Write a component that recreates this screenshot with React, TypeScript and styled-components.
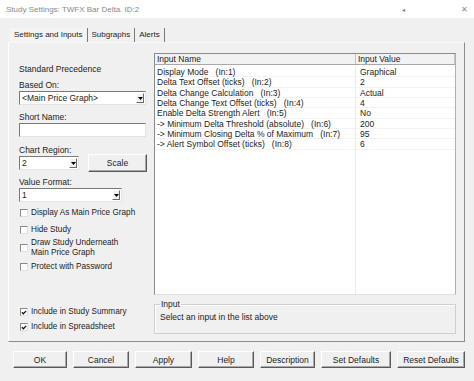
import React from 'react';
import styled, { createGlobalStyle } from 'styled-components';

const GlobalStyle = createGlobalStyle`
  body {
    margin: 0;
    font-family: 'Liberation Sans', Arial, sans-serif;
    font-size: 8.5px;
    color: #1c1c1c;
  }
`;

interface IInput {
  name: string;
  idx: number;
  value: string;
}

const inputs: IInput[] = [
  { name: 'Display Mode', idx: 1, value: 'Graphical' },
  { name: 'Delta Text Offset (ticks)', idx: 2, value: '2' },
  { name: 'Delta Change Calculation', idx: 3, value: 'Actual' },
  { name: 'Delta Change Text Offset (ticks)', idx: 4, value: '4' },
  { name: 'Enable Delta Strength Alert', idx: 5, value: 'No' },
  { name: '-> Minimum Delta Threshold (absolute)', idx: 6, value: '200' },
  { name: '-> Minimum Closing Delta % of Maximum', idx: 7, value: '95' },
  { name: '-> Alert Symbol Offset (ticks)', idx: 8, value: '6' },
];

const footerButtons = [
  { label: 'OK', width: 54 },
  { label: 'Cancel', width: 56 },
  { label: 'Apply', width: 57 },
  { label: 'Help', width: 56 },
  { label: 'Description', width: 55 },
  { label: 'Set Defaults', width: 70 },
  { label: 'Reset Defaults', width: 68 },
];

function Combo(props: { text: string; width: number }) {
  return (
    <ComboBox $width={props.width}>
      <ComboText>{props.text}</ComboText>
      <ComboArrow>
        <svg width="5" height="3" viewBox="0 0 5 3">
          <path d="M0 0 H5 L2.5 3 Z" fill="#000" />
        </svg>
      </ComboArrow>
    </ComboBox>
  );
}

function Check(props: { checked?: boolean; children: React.ReactNode; $top: number }) {
  return (
    <CheckRow $top={props.$top}>
      <CheckBox>
        {props.checked ? (
          <svg width="7" height="7" viewBox="0 0 7 7">
            <path d="M1 3.2 L2.8 5 L6 1.6" stroke="#111" strokeWidth="1.4" fill="none" />
          </svg>
        ) : null}
      </CheckBox>
      <CheckLabel>{props.children}</CheckLabel>
    </CheckRow>
  );
}

export default function App() {
  return (
    <Window>
      <GlobalStyle />
      <TitleBar>
        <TitleText>Study Settings: TWFX Bar Delta. ID:2</TitleText>
        <TitleIcons>
          <SmallGlyph>◂</SmallGlyph>
          <CloseGlyph>✕</CloseGlyph>
        </TitleIcons>
      </TitleBar>

      <TabStrip>
        <Tab $active>Settings and Inputs</Tab>
        <Tab>Subgraphs</Tab>
        <Tab>Alerts</Tab>
      </TabStrip>

      <TabPanel>
        <LeftColumn>
          <Label $top={21}>Standard Precedence</Label>
          <Label $top={5}>Based On:</Label>
          <Combo text="<Main Price Graph>" width={127} />
          <Label $top={7}>Short Name:</Label>
          <TextInput />
          <Label $top={8}>Chart Region:</Label>
          <InlineRow>
            <Combo text="2" width={60} />
            <PushButton $width={59} $height={18}>Scale</PushButton>
          </InlineRow>
          <Label $top={5}>Value Format:</Label>
          <Combo text="1" width={103} />
          <Check $top={6}>Display As Main Price Graph</Check>
          <Check $top={7}>Hide Study</Check>
          <Check $top={3}>
            Draw Study Underneath
            <br />
            Main Price Graph
          </Check>
          <Check $top={4}>Protect with Password</Check>
          <Check $top={35} checked>
            Include in Study Summary
          </Check>
          <Check $top={5} checked>
            Include in Spreadsheet
          </Check>
        </LeftColumn>

        <RightColumn>
          <ListView>
            <HeaderRow>
              <HeaderCell $first>Input Name</HeaderCell>
              <HeaderCell>Input Value</HeaderCell>
            </HeaderRow>
            <Spacer $h={2} />
            {inputs.map((input: IInput) => (
              <Row key={input.idx}>
                <Cell $first>
                  {input.name}&nbsp;&nbsp;&nbsp;(In:{input.idx})
                </Cell>
                <Cell>{input.value}</Cell>
              </Row>
            ))}
            <FillerRow>
              <Cell $first />
              <Cell />
            </FillerRow>
          </ListView>

          <GroupBox>
            <Legend>Input</Legend>
            <GroupText>Select an input in the list above</GroupText>
          </GroupBox>
        </RightColumn>
      </TabPanel>

      <ButtonBar>
        {footerButtons.map((b) => (
          <PushButton key={b.label} $width={b.width} $height={17}>
            {b.label}
          </PushButton>
        ))}
      </ButtonBar>
    </Window>
  );
}

const Window = styled.div`
  width: 474px;
  height: 381px;
  background: #f0f0f0;
  overflow: hidden;
  display: flex;
  flex-direction: column;
`;

const TitleBar = styled.div`
  height: 18px;
  background: #ffffff;
  display: flex;
  align-items: center;
  justify-content: space-between;
  padding: 0 6px;
`;

const TitleText = styled.span`
  color: #8a8a8a;
  font-size: 8px;
`;

const TitleIcons = styled.div`
  display: flex;
  align-items: center;
  gap: 56px;
`;

const SmallGlyph = styled.span`
  color: #777;
  font-size: 6px;
`;

const CloseGlyph = styled.span`
  color: #8a8a8a;
  font-size: 8px;
`;

const TabStrip = styled.div`
  display: flex;
  align-items: center;
  margin-top: 10px;
  height: 14px;
  padding-left: 10px;
`;

const Tab = styled.div<{ $active?: boolean }>`
  padding: 0 4px;
  height: 14px;
  line-height: 14px;
  border-right: 1px solid #7a7a7a;
  font-size: 8px;
  background: ${(p) => (p.$active ? '#f4f4f4' : 'transparent')};
`;

const TabPanel = styled.div`
  margin: 0 9px 0 8px;
  height: 300px;
  border-top: 1px solid #f8f8f8;
  border-left: 1px solid #ffffff;
  border-right: 1px solid #8c8c8c;
  border-bottom: 1px solid #8c8c8c;
  display: flex;
  box-sizing: border-box;
`;

const LeftColumn = styled.div`
  width: 145px;
  padding-left: 10px;
  box-sizing: border-box;
  display: flex;
  flex-direction: column;
  align-items: flex-start;
`;

const Label = styled.div<{ $top: number }>`
  margin-top: ${(p) => p.$top}px;
  height: 10px;
  line-height: 10px;
  margin-bottom: 1px;
`;

const Spacer = styled.div<{ $h: number }>`
  height: ${(p) => p.$h}px;
  flex-shrink: 0;
`;

const ComboBox = styled.div<{ $width: number }>`
  width: ${(p) => p.$width}px;
  height: 14px;
  box-sizing: border-box;
  background: #ffffff;
  border-top: 1px solid #7a7a7a;
  border-left: 1px solid #7a7a7a;
  border-right: 1px solid #e3e3e3;
  border-bottom: 1px solid #e3e3e3;
  display: flex;
  align-items: stretch;
  padding: 1px;
`;

const ComboText = styled.div`
  flex: 1;
  line-height: 10px;
  padding-left: 1px;
  white-space: nowrap;
  overflow: hidden;
`;

const ComboArrow = styled.div`
  width: 8px;
  box-sizing: border-box;
  background: #f0f0f0;
  border-top: 1px solid #fff;
  border-left: 1px solid #fff;
  border-right: 1px solid #6a6a6a;
  border-bottom: 1px solid #6a6a6a;
  display: flex;
  align-items: center;
  justify-content: center;
`;

const TextInput = styled.div`
  width: 127px;
  height: 14px;
  box-sizing: border-box;
  background: #ffffff;
  border-top: 1px solid #7a7a7a;
  border-left: 1px solid #7a7a7a;
  border-right: 1px solid #e3e3e3;
  border-bottom: 1px solid #e3e3e3;
`;

const InlineRow = styled.div`
  display: flex;
  align-items: center;
  gap: 9px;
  margin-top: -2px;
`;

const PushButton = styled.div<{ $width: number; $height: number }>`
  width: ${(p) => p.$width}px;
  height: ${(p) => p.$height}px;
  box-sizing: border-box;
  background: #f0f0f0;
  border-top: 1px solid #ffffff;
  border-left: 1px solid #ffffff;
  border-right: 1px solid #5a5a5a;
  border-bottom: 1px solid #5a5a5a;
  box-shadow: inset -1px -1px 0 #a8a8a8;
  display: flex;
  align-items: center;
  justify-content: center;
  font-size: 8.5px;
  white-space: nowrap;
`;

const CheckRow = styled.div<{ $top: number }>`
  margin-top: ${(p) => p.$top}px;
  display: flex;
  align-items: center;
  gap: 3px;
  padding-left: 1px;
`;

const CheckBox = styled.div`
  width: 8px;
  height: 8px;
  box-sizing: border-box;
  background: #ffffff;
  border-top: 1px solid #8a8a8a;
  border-left: 1px solid #8a8a8a;
  border-right: 1px solid #e0e0e0;
  border-bottom: 1px solid #e0e0e0;
  display: flex;
  align-items: center;
  justify-content: center;
  flex-shrink: 0;
`;

const CheckLabel = styled.div`
  line-height: 10px;
  font-size: 8.2px;
`;

const RightColumn = styled.div`
  width: 302px;
  display: flex;
  flex-direction: column;
  padding-top: 10px;
`;

const ListView = styled.div`
  height: 242px;
  box-sizing: border-box;
  background: #ffffff;
  border-top: 1px solid #8a8a8a;
  border-left: 1px solid #8a8a8a;
  border-right: 1px solid #b0b0b0;
  border-bottom: 1px solid #e0e0e0;
  display: flex;
  flex-direction: column;
`;

const HeaderRow = styled.div`
  display: flex;
  height: 10px;
  background: #f2f2f2;
  border-bottom: 1px solid #a8a8a8;
`;

const HeaderCell = styled.div<{ $first?: boolean }>`
  ${(p) => (p.$first ? 'width: 201px;' : 'flex: 1;')}
  padding-left: 2px;
  line-height: 10px;
  border-right: 1px solid #c4c4c4;
  box-sizing: border-box;
`;

const Row = styled.div`
  display: flex;
  height: 10.35px;
  border-bottom: 1px solid #f3f3f3;
  box-sizing: border-box;
`;

const FillerRow = styled.div`
  display: flex;
  flex: 1;
`;

const Cell = styled.div<{ $first?: boolean }>`
  ${(p) => (p.$first ? 'width: 201px; border-right: 1px solid #ededed;' : 'flex: 1;')}
  padding-left: ${(p) => (p.$first ? 2 : 4)}px;
  line-height: 10px;
  white-space: nowrap;
  box-sizing: border-box;
`;

const GroupBox = styled.fieldset`
  margin: 5px 0 0 0;
  padding: 0 5px;
  height: 34px;
  box-sizing: border-box;
  border: 1px solid #cfcfcf;
  box-shadow: inset 1px 1px 0 #fff;
  min-inline-size: 0;
`;

const Legend = styled.legend`
  padding: 0 1px;
  margin-left: 0;
  font-size: 8.5px;
  line-height: 9px;
`;

const GroupText = styled.div`
  margin-top: 3px;
  line-height: 10px;
`;

const ButtonBar = styled.div`
  display: flex;
  justify-content: space-between;
  margin: 9px 9px 0 13px;
`;
